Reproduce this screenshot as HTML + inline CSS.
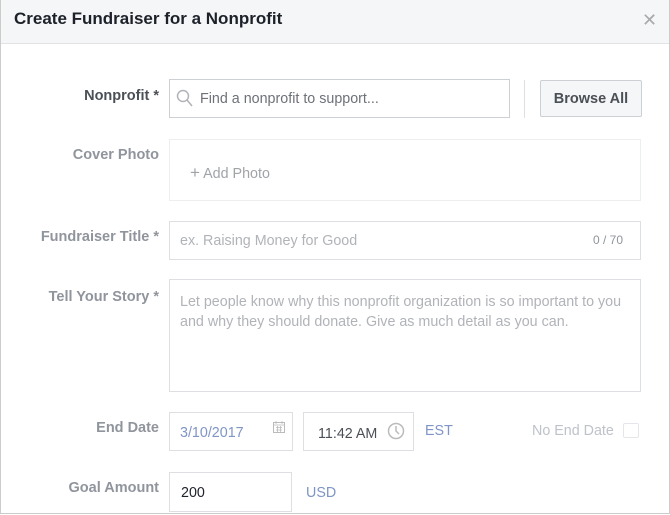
<!DOCTYPE html>
<html><head><style>
body{margin:0;width:670px;height:515px;overflow:hidden;background:#fff;font-family:"Liberation Sans",Arial,sans-serif;}
.wrap{position:absolute;left:0;top:0;width:668px;height:513px;border:1px solid #ccc;border-top:none;}
.hd{position:absolute;left:0;top:0;width:668px;height:43px;background:#f5f6f7;border-bottom:1px solid #e2e3e5;}
.hd .t{position:absolute;left:13px;top:9px;font-size:17px;font-weight:bold;color:#1d2129;}
.x{position:absolute;left:641px;top:10px;font-size:18px;color:#aaa;}
.lb{position:absolute;right:511px;font-size:14.5px;font-weight:bold;color:#90949c;text-align:right;white-space:nowrap;}
.box{position:absolute;border:1px solid #dddfe2;box-sizing:border-box;background:#fff;}
.ph{position:absolute;font-size:14.3px;color:#b0b3b8;white-space:nowrap;}
</style></head><body>
<div class="wrap">
<div class="hd"><div class="t">Create Fundraiser for a Nonprofit</div><div class="x">✕</div></div>
</div>
<div class="lb" style="top:88px;color:#4b4f56">Nonprofit *</div>
<div class="box" style="left:169px;top:79px;width:341px;height:39px;border-color:#ccd0d5"></div>
<svg style="position:absolute;left:176px;top:89px" width="18" height="19" viewBox="0 0 18 19"><circle cx="7" cy="7" r="5.5" fill="none" stroke="#b0b3b8" stroke-width="1.5"/><path d="M11 11l5 6" stroke="#b0b3b8" stroke-width="1.5"/></svg>
<div class="ph" style="left:200px;top:91px;color:#6d7178">Find a nonprofit to support...</div>
<div style="position:absolute;left:524px;top:80px;width:1px;height:38px;background:#dddfe2"></div>
<div class="box" style="left:540px;top:80px;width:102px;height:37px;background:#f5f6f7;border-color:#ccd0d5;border-radius:2px;font-size:14.5px;font-weight:bold;color:#4b4f56;text-align:center;line-height:37px">Browse All</div>

<div class="lb" style="top:147px">Cover Photo</div>
<div class="box" style="left:169px;top:139px;width:472px;height:62px;border-color:#eceef0"></div>
<div class="ph" style="left:190px;top:163px;color:#a0a3a8"><span style="font-size:17px">+</span> Add Photo</div>

<div class="lb" style="top:229px">Fundraiser Title *</div>
<div class="box" style="left:169px;top:221px;width:472px;height:39px"></div>
<div class="ph" style="left:180px;top:233px">ex. Raising Money for Good</div>
<div class="ph" style="left:593px;top:233px;font-size:12px;color:#90949c">0 / 70</div>

<div class="lb" style="top:289px">Tell Your Story *</div>
<div class="box" style="left:169px;top:279px;width:472px;height:113px"></div>
<div class="ph" style="left:180px;top:292px;line-height:20px">Let people know why this nonprofit organization is so important to you<br>and why they should donate. Give as much detail as you can.</div>

<div class="lb" style="top:420px">End Date</div>
<div class="box" style="left:169px;top:412px;width:124px;height:39px"></div>
<div class="ph" style="left:180px;top:425px;color:#7f95c6">3/10/2017</div>
<svg style="position:absolute;left:272px;top:420px" width="14" height="14" viewBox="0 0 14 14"><rect x="1.5" y="2.5" width="11" height="10" fill="none" stroke="#bbb"/><path d="M1.5 5h11M4 1v3M10 1v3M4 7.5h6M4 10h6M5.5 6v6M8.5 6v6" stroke="#bbb" stroke-width=".8"/></svg>
<div class="box" style="left:303px;top:412px;width:111px;height:39px"></div>
<div class="ph" style="left:318px;top:426px;color:#4b4f56">11:42 AM</div>
<svg style="position:absolute;left:387px;top:422px" width="18" height="18" viewBox="0 0 18 18"><circle cx="9" cy="9" r="7.5" fill="none" stroke="#bbb" stroke-width="1.5"/><path d="M9 4v5l3 3" fill="none" stroke="#bbb" stroke-width="1.5"/></svg>
<div class="ph" style="left:425px;top:423px;color:#7f95c6">EST</div>
<div class="ph" style="left:532px;top:423px;color:#bec2c9">No End Date</div>
<div class="box" style="left:623px;top:423px;width:16px;height:15px;border-color:#e4e6e9;border-radius:2px"></div>

<div class="lb" style="top:480px">Goal Amount</div>
<div class="box" style="left:169px;top:472px;width:123px;height:40px"></div>
<div class="ph" style="left:181px;top:485px;color:#1d2129">200</div>
<div class="ph" style="left:306px;top:485px;color:#7f95c6">USD</div>
</body></html>
